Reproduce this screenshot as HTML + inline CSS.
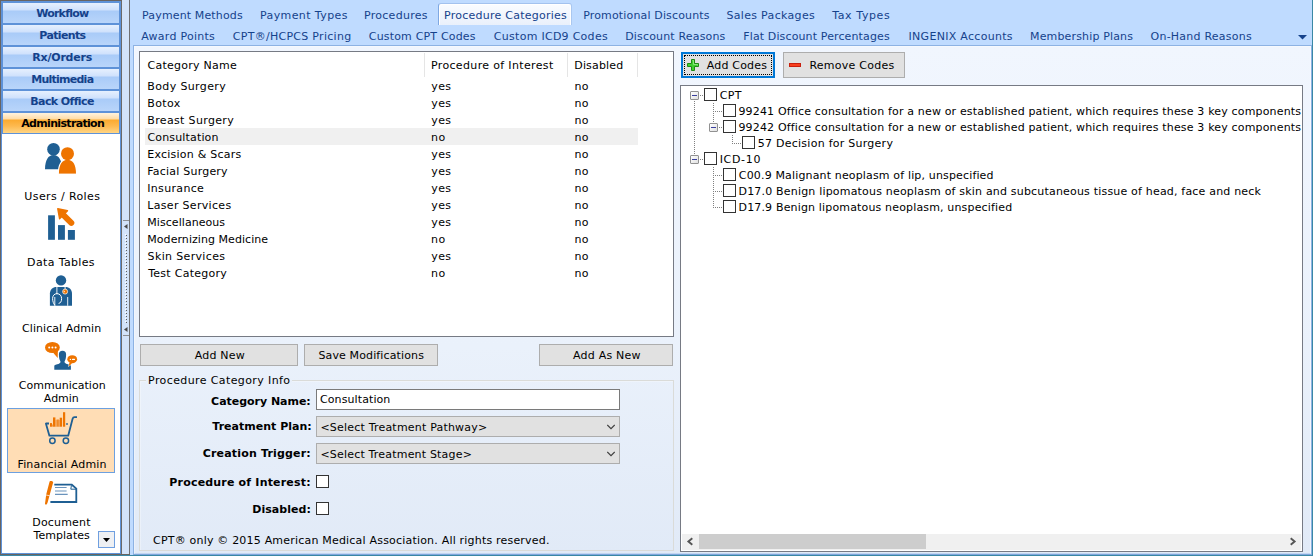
<!DOCTYPE html>
<html>
<head>
<meta charset="utf-8">
<title>Procedure Categories</title>
<style>
html,body{margin:0;padding:0;}
body{width:1313px;height:556px;overflow:hidden;position:relative;background:#BFDBFF;
 font-family:"DejaVu Sans","Liberation Sans",sans-serif;font-size:11px;color:#000;}
#root div,#root span,#root svg{position:absolute;box-sizing:border-box;}
.t{white-space:nowrap;line-height:14px;height:14px;font-size:11px;color:#000;}
.t.b{font-weight:bold;}
.t.nav{font-weight:bold;color:#15428B;}
.t.nav.k{color:#000;}
.t.tab{color:#15428B;}
/* ---------- sidebar ---------- */
#side{left:0;top:0;width:122px;height:554px;background:#fff;}
.nb{left:3px;width:116px;height:20px;background:linear-gradient(#E6F0FE 0,#CFE1FC 7px,#A9CBF8 8px,#B9D5FA 20px);}
.nb.sel{background:linear-gradient(#FFF3DF 0,#FFDCA6 6px,#FBAA30 7px,#FDB94F 13px,#FFD584 20px);}
#fin{left:7px;top:408px;width:108px;height:65px;background:#FFDDB5;border:1px solid #6CA0E0;}
#more{left:98px;top:531px;width:17px;height:17px;background:#EEF0F3;border:1px solid #6F9FE0;}
/* ---------- splitter ---------- */
#spl{left:122px;top:0;width:7px;height:554px;background:#D3E3FA;}
/* ---------- tabs ---------- */
#seltab{left:438px;top:3px;width:134px;height:22px;background:linear-gradient(#FAFCFF,#E9F0FB);border:1px solid #A3C2EE;border-left-color:#7FA8E2;border-right-color:#A9C7F0;border-bottom:none;border-radius:3px 3px 0 0;box-shadow:inset 1px 1px 0 #fff,inset -1px 0 0 #fff;}
/* ---------- panel ---------- */
#panel{left:133px;top:45px;width:1179px;height:510px;background:linear-gradient(#F1F6FE 0,#EAF1FB 300px,#E1EAF7 100%);border:1px solid #8DB2E3;border-bottom-color:#7FA6DC;box-shadow:inset 1px 1px 0 rgba(255,255,255,.35),inset -1px 0 0 rgba(255,255,255,.45),inset 0 -1px 0 #C2D6F1;}
#list{left:139px;top:51px;width:535px;height:286px;background:#fff;border:1px solid #767A84;}
.colsep{width:1px;top:53px;height:24px;background:#E5E5E5;}
#selrow{left:145px;top:128px;width:493px;height:17px;background:#F0F0F0;}
.btn{background:#E1E1E1;border:1px solid #ADADAD;}
#grp{left:139px;top:380px;width:535px;height:171px;border:1px solid #DADBD8;box-shadow:inset 1px 1px 0 rgba(255,255,255,.3);}
#grpgap{left:146px;top:380px;width:146px;height:2px;background:#E8EFF9;}
#inp{left:316px;top:389px;width:304px;height:21px;background:#fff;border:1px solid #7A7A7A;}
.cmb{left:316px;width:304px;height:21px;background:#E1E1E1;border:1px solid #ADADAD;}
.cb{width:13px;height:13px;background:#fff;border:1px solid #333;}
#tree{left:680px;top:85px;width:623px;height:467px;background:#fff;border:1px solid #767A84;}
#sb{left:682px;top:534px;width:619px;height:16px;background:#F0F0F0;}
#thumb{left:699px;top:534px;width:227px;height:15px;background:#CDCDCD;}
.ex{width:9px;height:9px;border:1px solid #919191;background:linear-gradient(135deg,#fff,#E0E0E0);border-radius:1px;}
.ex i{position:absolute;left:1px;top:3px;width:5px;height:1px;background:#3A3F9E;}
.dv{width:1px;background:repeating-linear-gradient(#808080 0 1px,transparent 1px 2px);}
.dh{height:1px;background:repeating-linear-gradient(90deg,#808080 0 1px,transparent 1px 2px);}
</style>
</head>
<body>
<div id="root">
 <!-- window frame -->
 <div style="left:0;top:0;width:1313px;height:556px;background:#3A88A5"></div>
 <div style="left:0;top:0;width:1312px;height:555px;background:#BFDBFF"></div>
 <!-- sidebar -->
 <div id="side"></div>
 <div style="left:0;top:0;width:1px;height:555px;background:#686462"></div>
 <div style="left:1px;top:0;width:1px;height:554px;background:#5E92D8"></div>
 <div style="left:120px;top:0;width:1px;height:554px;background:#5E92D8"></div>
 <div style="left:121px;top:0;width:1px;height:555px;background:#6C6A69"></div>
 <div style="left:1px;top:553px;width:120px;height:1px;background:#5E92D8"></div>
 <div style="left:0;top:554px;width:130px;height:1px;background:#686462"></div>
 <div style="left:1px;top:0;width:120px;height:134px;background:#5E92D8"></div>
 <div style="left:0;top:0;width:122px;height:1px;background:#686462"></div>
 <div class="nb" style="top:3px"></div>
 <div class="nb" style="top:25px"></div>
 <div class="nb" style="top:47px"></div>
 <div class="nb" style="top:69px"></div>
 <div class="nb" style="top:91px"></div>
 <div class="nb sel" style="top:113px"></div>
 <div id="fin"></div>
 <div id="more"><svg style="left:4px;top:6px" width="7" height="4" viewBox="0 0 7 4"><path d="M0 0H7L3.5 4Z" fill="#000"/></svg></div>
  <svg style="left:36px;top:138px" width="50" height="40" viewBox="0 0 50 40">
  <circle cx="17.5" cy="11.3" r="6.3" fill="#1F5F93"/>
  <path d="M9 31.3C9 21.8 12.3 16.9 17.5 16.9C22.7 16.9 26 21.8 26 31.3Z" fill="#1F5F93"/>
  <g stroke="#fff" stroke-width="2.4" fill="#fff">
  <circle cx="31.5" cy="15.7" r="6.5"/>
  <path d="M22.9 35.8C22.9 26.6 26.2 21.8 31.5 21.8C36.8 21.8 40 26.6 40 35.8Z"/>
  </g>
  <g fill="#EE7400">
  <circle cx="31.5" cy="15.7" r="6.5"/>
  <path d="M22.9 35.8C22.9 26.6 26.2 21.8 31.5 21.8C36.8 21.8 40 26.6 40 35.8Z"/>
  </g>
  <rect x="21" y="35.8" width="21" height="3" fill="#fff"/>
 </svg>
 <svg style="left:36px;top:204px" width="50" height="40" viewBox="0 0 50 40">
  <rect x="12.1" y="11.3" width="6.8" height="24.5" fill="#1F5F93"/>
  <rect x="22" y="21.1" width="6.9" height="14.7" fill="#1F5F93"/>
  <rect x="31.9" y="26" width="7" height="9.8" fill="#1F5F93"/>
  <path d="M21.8 4.8L31.5 6.7L23.6 14.8Z" fill="#EE7400" stroke="#EE7400" stroke-width="1.4" stroke-linejoin="round"/>
  <path d="M27 10.6L35.3 18.9" stroke="#EE7400" stroke-width="6" stroke-linecap="round"/>
 </svg>
 <svg style="left:36px;top:270px" width="50" height="40" viewBox="0 0 50 40">
  <circle cx="25" cy="10.4" r="5.2" fill="#1F5F93"/>
  <path d="M13.9 35.8V23.5C13.9 19.5 16.8 16.9 20.5 16.9H29.5C33.2 16.9 36 19.5 36 23.5V35.8Z" fill="#1F5F93"/>
  <path d="M18.8 27V35.8M31.7 27V35.8" stroke="#fff" stroke-width="0.9"/>
  <path d="M20.9 16.9V23.6" stroke="#fff" stroke-width="0.9" fill="none"/>
  <path d="M20.9 23.6C18 23.6 16.6 26 16.6 28.6C16.6 31.5 17.6 33.5 18.6 35M20.9 23.6C24.2 23.6 25.6 26 25.6 28.6C25.6 31.5 24.5 33 23 33.4" stroke="#fff" stroke-width="1" fill="none" stroke-linecap="round"/>
  <path d="M29.1 16.9V19" stroke="#fff" stroke-width="0.9"/>
  <circle cx="29.1" cy="21.6" r="2.5" fill="#EE7400" stroke="#fff" stroke-width="0.7"/>
  <circle cx="28.3" cy="21.6" r="0.8" fill="#FFD9B0"/>
 </svg>
 <svg style="left:36px;top:336px" width="50" height="40" viewBox="0 0 50 40">
  <ellipse cx="16.4" cy="11.5" rx="7.4" ry="5.6" fill="#EE7400"/>
  <path d="M17 16.5L21.7 22L21.9 14Z" fill="#EE7400"/>
  <circle cx="13.2" cy="11.5" r="1" fill="#fff"/><circle cx="16.4" cy="11.5" r="1" fill="#fff"/><circle cx="19.6" cy="11.5" r="1" fill="#fff"/>
  <path d="M22.9 18.5C22.9 15.8 24.2 14.7 26.5 14.7C28.8 14.7 30.1 15.8 30.1 18.5C30.1 21.5 29.6 23.8 28.6 25.2V26.5C29.5 27.8 31.5 28.3 33.5 28.7C34.5 28.9 34.9 29.4 34.9 30.3V33.7H18.3V30.3C18.3 29.4 18.7 28.9 19.7 28.7C21.7 28.3 23.6 27.8 24.4 26.5V25.2C23.4 23.8 22.9 21.5 22.9 18.5Z" fill="#1F5F93"/>
  <g stroke="#fff" stroke-width="0.8" paint-order="stroke" fill="#EE7400">
  <path d="M33.8 26.3L32.6 30.4L36.6 26.8Z"/>
  <ellipse cx="36.2" cy="23.2" rx="4.9" ry="4"/>
  </g>
  <path d="M33.8 26.3L32.9 29.6L36 26.9Z" fill="#EE7400"/>
  <circle cx="34.4" cy="23.4" r="0.7" fill="#fff"/><rect x="36" y="22.8" width="3" height="1.2" rx="0.5" fill="#fff"/>
 </svg>
 <svg style="left:36px;top:408px" width="50" height="40" viewBox="0 0 50 40">
  <g fill="#EE7400"><rect x="14" y="15.1" width="2" height="3.6"/><rect x="17" y="9.4" width="2.4" height="9.3"/><rect x="20.5" y="11.5" width="2.4" height="7.2" fill="#F08A28"/><rect x="23.7" y="9.7" width="2.4" height="9"/><rect x="27" y="4.2" width="2.2" height="14.5"/></g>
  <rect x="15.8" y="16.5" width="1.4" height="2.2" fill="#F29B48"/><rect x="19.3" y="12" width="1.3" height="6.7" fill="#F29B48"/><rect x="22.8" y="12" width="1" height="6.7" fill="#F29B48"/>
  <path d="M41 9.1H38.6C37.4 9.1 36.9 9.6 36.6 10.8L32.2 27.7H13.4L9.9 15.5H13" fill="none" stroke="#1F5F93" stroke-width="1.8" stroke-linejoin="round"/>
  <rect x="30.2" y="15.2" width="1.6" height="1.6" fill="#1F5F93"/>
  <circle cx="16.4" cy="32.7" r="2.7" fill="none" stroke="#1F5F93" stroke-width="1.5"/>
  <circle cx="29.9" cy="32.7" r="2.7" fill="none" stroke="#1F5F93" stroke-width="1.5"/>
 </svg>
 <svg style="left:36px;top:474px" width="50" height="40" viewBox="0 0 50 40">
  <path d="M18.3 10.7H35.8L40.3 14.6V28H14.4" fill="none" stroke="#1F5F93" stroke-width="1.8"/>
  <path d="M35.4 11.5L34.8 15.2H40" fill="none" stroke="#1F5F93" stroke-width="1"/>
  <path d="M19 13.5H30.6M19 17H30.6M19 20.4H31.7" stroke="#6A93BC" stroke-width="1.1"/>
  <path d="M13.6 7.5C14.6 6.7 16.6 7 17.2 8.2L13.6 21.2L11.6 28.6C11.2 30 10.6 30.8 9.6 30.6C8.9 30.4 8.9 29.4 9.2 28.2L10.2 20.4Z" fill="#EE7400"/>
  <path d="M10 21L13.8 21.8" stroke="#fff" stroke-width="0.7"/>
 </svg>

 <!-- splitter -->
 <div id="spl"></div>
 <div style="left:129px;top:0;width:1px;height:554px;background:#6F7073"></div>
  <div style="left:123px;top:220px;width:6px;height:1px;background:#8E9094"></div>
 <div style="left:123px;top:335px;width:6px;height:1px;background:#8E9094"></div>
 <svg style="left:124px;top:224px" width="4" height="5" viewBox="0 0 4 5"><path d="M3.5 0V5L0 2.5Z" fill="#4A4A4A"/></svg>
 <svg style="left:124px;top:327px" width="4" height="5" viewBox="0 0 4 5"><path d="M3.5 0V5L0 2.5Z" fill="#4A4A4A"/></svg>
 <div style="left:125px;top:234px;width:1px;height:88px;background:repeating-linear-gradient(#fff 0 1px,transparent 1px 3px)"></div>
 <div style="left:126px;top:235px;width:1px;height:88px;background:repeating-linear-gradient(#5C5C5C 0 1px,transparent 1px 3px)"></div>
 <!-- tabs -->
 <div id="seltab"></div>
 <svg style="left:1298px;top:35px" width="9" height="5" viewBox="0 0 9 5"><path d="M0 0H9L4.5 4.5Z" fill="#15428B"/></svg>
 <!-- panel -->
 <div id="panel"></div>
 <div id="list"></div>
 <div id="selrow"></div>
 <div class="colsep" style="left:424px"></div>
 <div class="colsep" style="left:567px"></div>
 <div class="colsep" style="left:637px"></div>
 <div class="btn" style="left:140px;top:344px;width:158px;height:22px"></div>
 <div class="btn" style="left:304px;top:344px;width:134px;height:22px"></div>
 <div class="btn" style="left:539px;top:344px;width:134px;height:22px"></div>
 <div id="grp"></div><div id="grpgap"></div>
 <div id="inp"></div>
 <div class="cmb" style="top:416px"></div>
 <div class="cmb" style="top:443px"></div>
 <svg style="left:607px;top:424px" width="8" height="6" viewBox="0 0 8 6"><path d="M0.3 0.9L4 4.6L7.7 0.9" fill="none" stroke="#3C3C3C" stroke-width="1.1"/></svg>
 <svg style="left:607px;top:451px" width="8" height="6" viewBox="0 0 8 6"><path d="M0.3 0.9L4 4.6L7.7 0.9" fill="none" stroke="#3C3C3C" stroke-width="1.1"/></svg>
 <div class="cb" style="left:316px;top:475px"></div>
 <div class="cb" style="left:316px;top:502px"></div>
 <!-- right: buttons -->
 <div style="left:681px;top:52px;width:94px;height:26px;background:#E1E1E1;border:2px solid #0078D7"></div>
 <div style="left:684px;top:55px;width:88px;height:20px;border:1px dotted #000"></div>
 <svg style="left:687px;top:59px" width="12" height="12" viewBox="0 0 12 12"><path d="M4.5 0.5H7.5V4.5H11.5V7.5H7.5V11.5H4.5V7.5H0.5V4.5H4.5Z" fill="#3FD030" stroke="#1E8A14" stroke-width="1"/><path d="M5.5 1.5H6.5V5.5H10.5V6.5" fill="none" stroke="#9CF08C" stroke-width="1" opacity=".8"/></svg>
 <div class="btn" style="left:783px;top:52px;width:122px;height:26px"></div>
 <svg style="left:789px;top:63px" width="12" height="4" viewBox="0 0 12 4"><rect x="0.5" y="0.5" width="11" height="3" fill="#F8401E" stroke="#C8200E" stroke-width="1"/></svg>
 <!-- tree -->
 <div id="tree"></div>
 <div id="sb"></div><div id="thumb"></div>
 <svg style="left:686px;top:537px" width="8" height="9" viewBox="0 0 8 9"><path d="M6.3 1.3L2.4 4.5L6.3 7.7" fill="none" stroke="#555" stroke-width="1.9"/></svg>
 <svg style="left:1289px;top:537px" width="8" height="9" viewBox="0 0 8 9"><path d="M1.7 1.3L5.6 4.5L1.7 7.7" fill="none" stroke="#555" stroke-width="1.9"/></svg>
  <div class="ex" style="left:690px;top:91px"><i></i></div>
 <div class="cb" style="left:704px;top:88px"></div>
 <div class="dh" style="left:700px;top:95px;width:3px"></div>
 <div class="ex" style="left:690px;top:155px"><i></i></div>
 <div class="cb" style="left:704px;top:152px"></div>
 <div class="dh" style="left:700px;top:159px;width:3px"></div>
 <div class="dv" style="left:694px;top:101px;height:53px"></div>
 <div class="dv" style="left:713px;top:103px;height:19px"></div>
 <div class="dh" style="left:715px;top:111px;width:7px"></div>
 <div class="cb" style="left:723px;top:104px"></div>
 <div class="ex" style="left:709px;top:123px"><i></i></div>
 <div class="dh" style="left:719px;top:127px;width:3px"></div>
 <div class="cb" style="left:723px;top:120px"></div>
 <div class="dv" style="left:732px;top:135px;height:9px"></div>
 <div class="dh" style="left:734px;top:143px;width:7px"></div>
 <div class="cb" style="left:742px;top:136px"></div>
 <div class="dv" style="left:713px;top:167px;height:41px"></div>
 <div class="dh" style="left:715px;top:175px;width:7px"></div>
 <div class="cb" style="left:723px;top:168px"></div>
 <div class="dh" style="left:715px;top:191px;width:7px"></div>
 <div class="cb" style="left:723px;top:184px"></div>
 <div class="dh" style="left:715px;top:207px;width:7px"></div>
 <div class="cb" style="left:723px;top:200px"></div>
 <!-- text -->
<span class="t nav" id="n1" style="left:36.16px;top:7px;letter-spacing:-0.757px">Workflow</span>
<span class="t nav" id="n2" style="left:39.34px;top:29px;letter-spacing:-0.657px">Patients</span>
<span class="t nav" id="n3" style="left:32.29px;top:51px;letter-spacing:-0.206px">Rx/Orders</span>
<span class="t nav" id="n4" style="left:31.29px;top:73px;letter-spacing:-0.754px">Multimedia</span>
<span class="t nav" id="n5" style="left:30.29px;top:95px;letter-spacing:-0.601px">Back Office</span>
<span class="t nav k" id="n6" style="left:21.22px;top:117px;letter-spacing:-0.670px">Administration</span>
<span class="t" id="s1" style="left:24.35px;top:190px;letter-spacing:0.386px">Users / Roles</span>
<span class="t" id="s2" style="left:27.10px;top:256px;letter-spacing:0.355px">Data Tables</span>
<span class="t" id="s3" style="left:22.02px;top:322px;letter-spacing:0.067px">Clinical Admin</span>
<span class="t" id="s4a" style="left:18.87px;top:379px;letter-spacing:0.007px">Communication</span>
<span class="t" id="s4b" style="left:43.83px;top:392px;letter-spacing:-0.023px">Admin</span>
<span class="t" id="s5" style="left:17.45px;top:458px;letter-spacing:0.172px">Financial Admin</span>
<span class="t" id="s6a" style="left:32.22px;top:516px;letter-spacing:0.187px">Document</span>
<span class="t" id="s6b" style="left:33.57px;top:529px;letter-spacing:0.035px">Templates</span>
<span class="t tab" id="ta0" style="left:142.08px;top:9px;letter-spacing:0.137px">Payment Methods</span>
<span class="t tab" id="ta1" style="left:259.97px;top:9px;letter-spacing:0.400px">Payment Types</span>
<span class="t tab" id="ta2" style="left:363.97px;top:9px;letter-spacing:0.286px">Procedures</span>
<span class="t tab" id="ta3" style="left:444.09px;top:9px;letter-spacing:0.248px">Procedure Categories</span>
<span class="t tab" id="ta4" style="left:583.20px;top:9px;letter-spacing:0.153px">Promotional Discounts</span>
<span class="t tab" id="ta5" style="left:726.40px;top:9px;letter-spacing:0.325px">Sales Packages</span>
<span class="t tab" id="ta6" style="left:832.30px;top:9px;letter-spacing:0.592px">Tax Types</span>
<span class="t tab" id="tb0" style="left:141.31px;top:30px;letter-spacing:0.249px">Award Points</span>
<span class="t tab" id="tb1" style="left:232.77px;top:30px;letter-spacing:0.283px">CPT®/HCPCS Pricing</span>
<span class="t tab" id="tb2" style="left:368.77px;top:30px;letter-spacing:0.179px">Custom CPT Codes</span>
<span class="t tab" id="tb3" style="left:493.87px;top:30px;letter-spacing:0.273px">Custom ICD9 Codes</span>
<span class="t tab" id="tb4" style="left:625.22px;top:30px;letter-spacing:0.168px">Discount Reasons</span>
<span class="t tab" id="tb5" style="left:743.24px;top:30px;letter-spacing:0.129px">Flat Discount Percentages</span>
<span class="t tab" id="tb6" style="left:908.50px;top:30px;letter-spacing:0.299px">INGENIX Accounts</span>
<span class="t tab" id="tb7" style="left:1030.04px;top:30px;letter-spacing:0.152px">Membership Plans</span>
<span class="t tab" id="tb8" style="left:1150.56px;top:30px;letter-spacing:0.229px">On-Hand Reasons</span>
<span class="t" id="h1" style="left:147.56px;top:59px;letter-spacing:0.258px">Category Name</span>
<span class="t" id="h2" style="left:430.97px;top:59px;letter-spacing:0.349px">Procedure of Interest</span>
<span class="t" id="h3" style="left:574.24px;top:59px;letter-spacing:0.174px">Disabled</span>
<span class="t" id="r0a" style="left:147.31px;top:80px;letter-spacing:0.372px">Body Surgery</span>
<span class="t" id="r0b" style="left:431.31px;top:80px;letter-spacing:0.393px">yes</span>
<span class="t" id="r0c" style="left:574.38px;top:80px;letter-spacing:0.280px">no</span>
<span class="t" id="r1a" style="left:147.31px;top:97px;letter-spacing:0.338px">Botox</span>
<span class="t" id="r1b" style="left:431.31px;top:97px;letter-spacing:0.393px">yes</span>
<span class="t" id="r1c" style="left:574.38px;top:97px;letter-spacing:0.280px">no</span>
<span class="t" id="r2a" style="left:147.31px;top:114px;letter-spacing:0.346px">Breast Surgery</span>
<span class="t" id="r2b" style="left:431.31px;top:114px;letter-spacing:0.393px">yes</span>
<span class="t" id="r2c" style="left:574.38px;top:114px;letter-spacing:0.280px">no</span>
<span class="t" id="r3a" style="left:147.56px;top:131px;letter-spacing:0.147px">Consultation</span>
<span class="t" id="r3b" style="left:431.03px;top:131px;letter-spacing:0.485px">no</span>
<span class="t" id="r3c" style="left:574.38px;top:131px;letter-spacing:0.280px">no</span>
<span class="t" id="r4a" style="left:147.31px;top:148px;letter-spacing:0.231px">Excision &amp; Scars</span>
<span class="t" id="r4b" style="left:431.31px;top:148px;letter-spacing:0.393px">yes</span>
<span class="t" id="r4c" style="left:574.38px;top:148px;letter-spacing:0.280px">no</span>
<span class="t" id="r5a" style="left:147.31px;top:165px;letter-spacing:0.215px">Facial Surgery</span>
<span class="t" id="r5b" style="left:431.31px;top:165px;letter-spacing:0.393px">yes</span>
<span class="t" id="r5c" style="left:574.38px;top:165px;letter-spacing:0.280px">no</span>
<span class="t" id="r6a" style="left:147.23px;top:182px;letter-spacing:0.334px">Insurance</span>
<span class="t" id="r6b" style="left:431.31px;top:182px;letter-spacing:0.393px">yes</span>
<span class="t" id="r6c" style="left:574.38px;top:182px;letter-spacing:0.280px">no</span>
<span class="t" id="r7a" style="left:147.31px;top:199px;letter-spacing:0.312px">Laser Services</span>
<span class="t" id="r7b" style="left:431.31px;top:199px;letter-spacing:0.393px">yes</span>
<span class="t" id="r7c" style="left:574.38px;top:199px;letter-spacing:0.280px">no</span>
<span class="t" id="r8a" style="left:147.31px;top:216px;letter-spacing:0.056px">Miscellaneous</span>
<span class="t" id="r8b" style="left:431.31px;top:216px;letter-spacing:0.393px">yes</span>
<span class="t" id="r8c" style="left:574.38px;top:216px;letter-spacing:0.280px">no</span>
<span class="t" id="r9a" style="left:147.31px;top:233px;letter-spacing:0.053px">Modernizing Medicine</span>
<span class="t" id="r9b" style="left:431.03px;top:233px;letter-spacing:0.485px">no</span>
<span class="t" id="r9c" style="left:574.38px;top:233px;letter-spacing:0.280px">no</span>
<span class="t" id="r10a" style="left:147.60px;top:250px;letter-spacing:0.346px">Skin Services</span>
<span class="t" id="r10b" style="left:431.31px;top:250px;letter-spacing:0.393px">yes</span>
<span class="t" id="r10c" style="left:574.38px;top:250px;letter-spacing:0.280px">no</span>
<span class="t" id="r11a" style="left:148.23px;top:267px;letter-spacing:0.262px">Test Category</span>
<span class="t" id="r11b" style="left:431.03px;top:267px;letter-spacing:0.485px">no</span>
<span class="t" id="r11c" style="left:574.38px;top:267px;letter-spacing:0.280px">no</span>
<span class="t" id="b1" style="left:194.73px;top:349px;letter-spacing:0.209px">Add New</span>
<span class="t" id="b2" style="left:318.50px;top:349px;letter-spacing:0.123px">Save Modifications</span>
<span class="t" id="b3" style="left:573.07px;top:349px;letter-spacing:0.215px">Add As New</span>
<span class="t" id="b4" style="left:706.80px;top:59px;letter-spacing:0.187px">Add Codes</span>
<span class="t" id="b5" style="left:809.43px;top:59px;letter-spacing:0.258px">Remove Codes</span>
<span class="t" id="g0" style="left:148.08px;top:374px;letter-spacing:0.393px">Procedure Category Info</span>
<span class="t b" id="g1" style="left:211.11px;top:395px;letter-spacing:-0.031px">Category Name:</span>
<span class="t b" id="g2" style="left:212.36px;top:420px;letter-spacing:0.016px">Treatment Plan:</span>
<span class="t b" id="g3" style="left:202.72px;top:447px;letter-spacing:0.175px">Creation Trigger:</span>
<span class="t b" id="g4" style="left:169.34px;top:476px;letter-spacing:0.185px">Procedure of Interest:</span>
<span class="t b" id="g5" style="left:252.34px;top:503px;letter-spacing:0.031px">Disabled:</span>
<span class="t" id="g6" style="left:320.02px;top:393px;letter-spacing:0.095px">Consultation</span>
<span class="t" id="g7" style="left:320.43px;top:421px;letter-spacing:0.201px">&lt;Select Treatment Pathway&gt;</span>
<span class="t" id="g8" style="left:320.43px;top:448px;letter-spacing:0.189px">&lt;Select Treatment Stage&gt;</span>
<span class="t" id="g9" style="left:153.02px;top:534px;letter-spacing:0.197px">CPT® only © 2015 American Medical Association. All rights reserved.</span>
<span class="t" id="t0" style="left:719.83px;top:89px;letter-spacing:0.345px">CPT</span>
<span class="t" id="t1" style="left:738.43px;top:105px;letter-spacing:0.161px">99241 Office consultation for a new or established patient, which requires these 3 key components</span>
<span class="t" id="t2" style="left:738.43px;top:121px;letter-spacing:0.161px">99242 Office consultation for a new or established patient, which requires these 3 key components</span>
<span class="t" id="t3" style="left:757.71px;top:137px;letter-spacing:0.259px">57 Decision for Surgery</span>
<span class="t" id="t4" style="left:719.70px;top:153px;letter-spacing:0.665px">ICD-10</span>
<span class="t" id="t5" style="left:738.86px;top:169px;letter-spacing:0.153px">C00.9 Malignant neoplasm of lip, unspecified</span>
<span class="t" id="t6" style="left:738.52px;top:185px;letter-spacing:0.188px">D17.0 Benign lipomatous neoplasm of skin and subcutaneous tissue of head, face and neck</span>
<span class="t" id="t7" style="left:738.52px;top:201px;letter-spacing:0.158px">D17.9 Benign lipomatous neoplasm, unspecified</span>
</div>
</body>
</html>
